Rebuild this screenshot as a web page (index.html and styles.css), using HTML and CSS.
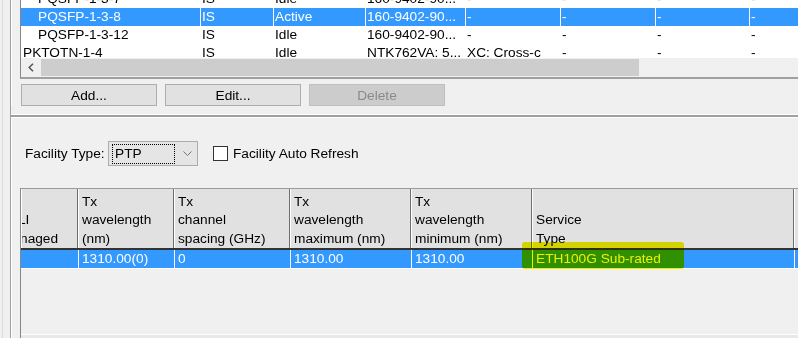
FILE: index.html
```html
<!DOCTYPE html>
<html lang="en">
<head>
  <meta charset="UTF-8" />
  <title>Facilities</title>
  <link rel="stylesheet" href="styles.css">
</head>
<body>
  <div class="window">
    <div class="pane">
      <section class="top">
        <div class="list">
          <div class="list-view">
            <div class="list-rows">
              <div class="list-row">
                <div class="indent">PQSFP-1-3-7</div><div>IS</div><div>Idle</div><div>160-9402-90...</div><div>-</div><div>-</div><div>-</div><div>-</div>
              </div>
              <div class="list-row sel">
                <div class="indent">PQSFP-1-3-8</div><div>IS</div><div>Active</div><div>160-9402-90...</div><div>-</div><div>-</div><div>-</div><div>-</div>
              </div>
              <div class="list-row">
                <div class="indent">PQSFP-1-3-12</div><div>IS</div><div>Idle</div><div>160-9402-90...</div><div>-</div><div>-</div><div>-</div><div>-</div>
              </div>
              <div class="list-row">
                <div>PKTOTN-1-4</div><div>IS</div><div>Idle</div><div>NTK762VA: 5...</div><div>XC: Cross-c</div><div>-</div><div>-</div><div>-</div>
              </div>
            </div>
          </div>
          <div class="hscroll">
            <div class="arrow">
              <svg width="6" height="9" viewBox="0 0 6 9"><polyline points="5,0.8 1.2,4.5 5,8.2" fill="none" stroke="#555" stroke-width="1.5"/></svg>
            </div>
            <div class="thumb"></div>
          </div>
        </div>
        <div class="buttons">
          <div class="btn">Add...</div>
          <div class="btn">Edit...</div>
          <div class="btn off">Delete</div>
        </div>
      </section>
      <div class="split"></div>
      <section class="bottom">
        <div class="filter">
          <div class="filter-label">Facility Type:</div>
          <div class="combo">
            <div class="combo-value">PTP</div>
            <svg width="9" height="5" viewBox="0 0 9 5"><polyline points="0.5,0.5 4.5,4.5 8.5,0.5" fill="none" stroke="#777" stroke-width="1"/></svg>
          </div>
          <div class="check"></div>
          <div class="check-label">Facility Auto Refresh</div>
        </div>

        <div class="btable">
          <div class="bhead">
            <div class="cut"><span class="l2">ULI</span><span class="l3">Managed</span></div>
            <div><span>Tx</span><span>wavelength</span><span>(nm)</span></div>
            <div><span>Tx</span><span>channel</span><span>spacing (GHz)</span></div>
            <div><span>Tx</span><span>wavelength</span><span>maximum (nm)</span></div>
            <div><span>Tx</span><span>wavelength</span><span>minimum (nm)</span></div>
            <div><span>Service</span><span>Type</span></div>
            <div></div>
          </div>
          <div class="brow">
            <div></div>
            <div>1310.00(0)</div>
            <div>0</div>
            <div>1310.00</div>
            <div>1310.00</div>
            <div>ETH100G Sub-rated</div>
            <div></div>
          </div>
          <div class="bbody"></div>
          <div class="bscroll"></div>
          <div class="marker"></div>
        </div>
      </section>
    </div>
  </div>
</body>
</html>
```

FILE: styles.css
```css
body {
  margin: 0;
  background: #f0f0f0;
  font-family: "Liberation Sans", Arial, sans-serif;
  font-size: 13.7px;
  color: #000;
  overflow: hidden;
}
.window {
  height: 338px;
  margin-left: 2px;
  border-left: 1px solid #dadada;
  padding-left: 7px;
  overflow: hidden;
}
.pane {
  height: 100%;
  border-left: 1px solid #a0a0a0;
  display: flex;
  flex-direction: column;
}
.top, .bottom {
  border-left: 1px solid #fff;
  padding-left: 8px;
}
.top, .split {
  flex-shrink: 0;
}

/* upper list */
.list {
  border-left: 1px solid #828790;
  border-bottom: 2px solid #a0a0a0;
}
.list-view {
  height: 58px;
  overflow: hidden;
  background: #fff;
}
.list-rows {
  margin-top: -10px;
}
.list-row {
  display: grid;
  grid-template-columns: 179px 73px 92px 100px 95px 95px 94px 120px;
  height: 18px;
  line-height: 18px;
}
.list-row > div {
  white-space: nowrap;
  overflow: hidden;
  padding-left: 1px;
  border-left: 1px solid transparent;
}
.list-row > div:first-child {
  border-left: 0;
  padding-left: 2px;
}
.list-row > div.indent {
  padding-left: 17px;
}
.list-row.sel {
  background: #3399ff;
  color: #fff;
}
.list-row.sel > div {
  border-left-color: #fff;
}
.hscroll {
  height: 19px;
  display: flex;
  background: #f0f0f0;
}
.arrow {
  width: 20px;
  display: flex;
  align-items: center;
  justify-content: center;
}
.thumb {
  width: 598px;
  height: 17px;
  margin-top: 1px;
  background: #cdcdcd;
}
.buttons {
  display: flex;
  gap: 8px;
  margin-top: 5px;
  padding-left: 1px;
}
.btn {
  box-sizing: border-box;
  width: 136px;
  height: 22px;
  border: 1px solid #adadad;
  background: #e1e1e1;
  display: flex;
  align-items: center;
  justify-content: center;
}
.btn.off {
  background: #cccccc;
  border-color: #bfbfbf;
  color: #8a8a8a;
}
.split {
  margin-top: 8px;
  height: 2px;
  background: #a0a0a0;
  border-top: 1px solid #fff;
  border-bottom: 1px solid #fff;
}

/* lower panel */
.bottom {
  flex: 1;
  min-height: 0;
  overflow: hidden;
  padding-top: 23px;
}
.filter {
  display: flex;
  align-items: center;
  height: 25px;
  padding-left: 5px;
}
.filter-label {
  width: 83px;
}
.combo {
  box-sizing: border-box;
  width: 90px;
  height: 25px;
  border: 1px solid #acacac;
  background: #e5e5e5;
  display: flex;
  align-items: center;
}
.combo-value {
  box-sizing: border-box;
  margin-left: 3px;
  width: 63px;
  height: 20px;
  border: 1px dotted #000;
  padding-left: 2px;
  line-height: 18px;
}
.combo svg {
  margin-left: 8px;
}
.check {
  box-sizing: border-box;
  margin-left: 15px;
  width: 15px;
  height: 15px;
  border: 1px solid #333;
  background: #fff;
}
.check-label {
  margin-left: 5px;
}
.btable {
  position: relative;
  margin-top: 22px;
  border-left: 1px solid #828790;
}
.bhead, .brow {
  display: grid;
  grid-template-columns: 57px 96px 116px 121px 121px 262px 100px;
}
.bhead {
  border-top: 1px solid #9a9a9a;
  border-bottom: 2px solid #333;
  background: #e1e1e1;
}
.bhead > div {
  box-sizing: border-box;
  height: 59px;
  border-left: 1px solid #fff;
  border-right: 1px solid #6e6e6e;
  padding: 0 3px;
  display: flex;
  flex-direction: column;
  justify-content: flex-end;
  line-height: 18.5px;
  white-space: nowrap;
  overflow: hidden;
}
.bhead > .cut .l2 {
  margin-left: -17px;
}
.bhead > .cut .l3 {
  margin-left: -24px;
}
.brow {
  height: 18px;
  line-height: 18px;
  background: #3399ff;
  color: #fff;
  border-bottom: 1px solid #fff;
}
.brow > div {
  border-left: 1px solid #fff;
  padding-left: 3px;
  white-space: nowrap;
  overflow: hidden;
}
.brow > div:first-child {
  border-left: 0;
}
.bbody {
  height: 65px;
}
.bscroll {
  height: 10px;
  border-top: 1px solid #fff;
  background: #e8e8e8;
}
.marker {
  position: absolute;
  left: 501px;
  top: 54px;
  width: 162px;
  height: 27px;
  background: #eef000;
  mix-blend-mode: multiply;
  border-radius: 3px;
  filter: blur(0.6px);
}
```
